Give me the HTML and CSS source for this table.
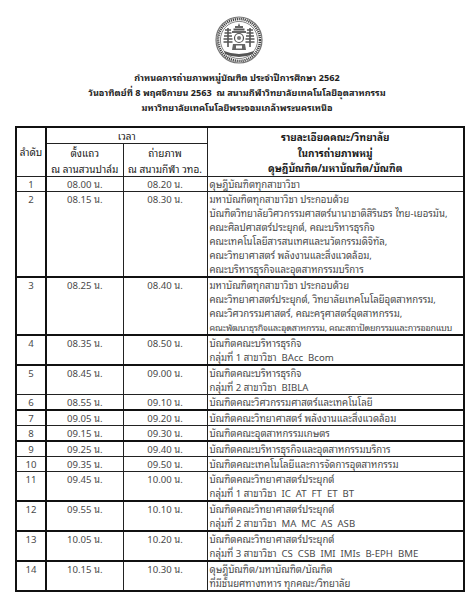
FILE: index.html
```html
<!DOCTYPE html>
<html lang="th">
<head>
<meta charset="utf-8">
<title>กำหนดการถ่ายภาพหมู่บัณฑิต</title>
<link rel="stylesheet" href="styles.css">
</head>
<body>
<div class="page">
  <div class="logo">
    <svg width="48" height="48" viewBox="0 0 48 48" aria-hidden="true">
      <circle cx="24" cy="24" r="23" fill="#fff" stroke="#777" stroke-width="1.2"/>
      <circle cx="24" cy="24" r="21" fill="none" stroke="#444" stroke-width="2.6" stroke-dasharray="1.2 0.8"/>
      <circle cx="24" cy="24" r="18.6" fill="#fff" stroke="#666" stroke-width="0.8"/>
      <path d="M24 7 L25 10 L23 10 Z" fill="#555"/>
      <rect x="20" y="10" width="8" height="2" fill="#666"/>
      <rect x="18.5" y="12.5" width="11" height="2" fill="#555"/>
      <rect x="17" y="15" width="14" height="2" fill="#666"/>
      <circle cx="24" cy="22" r="4.5" fill="#fff" stroke="#555" stroke-width="1.2"/>
      <circle cx="24" cy="22" r="2" fill="#777"/>
      <path d="M12 12 L14 12 L14 31 L12 31 Z" fill="#777"/>
      <path d="M10 14 h6 M9.5 17 h7 M9 20 h8 M8.5 23 h9 M8.5 26 h9" stroke="#555" stroke-width="1.4"/>
      <path d="M34 12 L36 12 L36 31 L34 31 Z" fill="#777"/>
      <path d="M32 14 h6 M31.5 17 h7 M31 20 h8 M30.5 23 h9 M30.5 26 h9" stroke="#555" stroke-width="1.4"/>
      <path d="M18 28 L30 28 L31 34 L17 34 Z" fill="#666"/>
      <rect x="21" y="29.5" width="6" height="3" fill="#fff"/>
      <path d="M9 35 Q24 41 39 35 L38 38 Q24 44 10 38 Z" fill="#555"/>
    </svg>
  </div>
  <div class="title">
    <p>กำหนดการถ่ายภาพหมู่บัณฑิต ประจำปีการศึกษา 2562</p>
    <p>วันอาทิตย์ที่ 8 พฤศจิกายน 2563 &nbsp;ณ สนามกีฬาวิทยาลัยเทคโนโลยีอุตสาหกรรม</p>
    <p>มหาวิทยาลัยเทคโนโลยีพระจอมเกล้าพระนครเหนือ</p>
  </div>

  <table class="schedule">
    <colgroup>
      <col class="c-no">
      <col class="c-line">
      <col class="c-shot">
      <col class="c-detail">
    </colgroup>
    <thead>
      <tr class="h1">
        <th rowspan="2" class="b-right">ลำดับ</th>
        <th colspan="2">เวลา</th>
        <th rowspan="2" class="h-detail">รายละเอียดคณะ/วิทยาลัย<br>ในการถ่ายภาพหมู่<br>ดุษฎีบัณฑิต/มหาบัณฑิต/บัณฑิต</th>
      </tr>
      <tr class="h2">
        <th>ตั้งแถว<br>ณ ลานสวนปาล์ม</th>
        <th>ถ่ายภาพ<br>ณ สนามกีฬา วทอ.</th>
      </tr>
    </thead>
    <tbody>
      <tr>
        <td class="num">1</td><td class="time">08.00 น.</td><td class="time">08.20 น.</td>
        <td class="detail">ดุษฎีบัณฑิตทุกสาขาวิชา</td>
      </tr>
      <tr class="thick">
        <td class="num">2</td><td class="time">08.15 น.</td><td class="time">08.30 น.</td>
        <td class="detail">มหาบัณฑิตทุกสาขาวิชา ประกอบด้วย<br>บัณฑิตวิทยาลัยวิศวกรรมศาสตร์นานาชาติสิรินธร ไทย-เยอรมัน,<br>คณะศิลปศาสตร์ประยุกต์, คณะบริหารธุรกิจ<br>คณะเทคโนโลยีสารสนเทศและนวัตกรรมดิจิทัล,<br>คณะวิทยาศาสตร์ พลังงานและสิ่งแวดล้อม,<br>คณะบริหารธุรกิจและอุตสาหกรรมบริการ</td>
      </tr>
      <tr class="thick">
        <td class="num">3</td><td class="time">08.25 น.</td><td class="time">08.40 น.</td>
        <td class="detail">มหาบัณฑิตทุกสาขาวิชา ประกอบด้วย<br>คณะวิทยาศาสตร์ประยุกต์, วิทยาลัยเทคโนโลยีอุตสาหกรรม,<br>คณะวิศวกรรมศาสตร์, คณะครุศาสตร์อุตสาหกรรม,<br><span class="tight">คณะพัฒนาธุรกิจและอุตสาหกรรม, คณะสถาปัตยกรรมและการออกแบบ</span></td>
      </tr>
      <tr class="thick">
        <td class="num">4</td><td class="time">08.35 น.</td><td class="time">08.50 น.</td>
        <td class="detail">บัณฑิตคณะบริหารธุรกิจ<br>กลุ่มที่ 1 สาขาวิชา &nbsp;BAcc &nbsp;Bcom</td>
      </tr>
      <tr>
        <td class="num">5</td><td class="time">08.45 น.</td><td class="time">09.00 น.</td>
        <td class="detail">บัณฑิตคณะบริหารธุรกิจ<br>กลุ่มที่ 2 สาขาวิชา &nbsp;BIBLA</td>
      </tr>
      <tr class="thick">
        <td class="num">6</td><td class="time">08.55 น.</td><td class="time">09.10 น.</td>
        <td class="detail">บัณฑิตคณะวิศวกรรมศาสตร์และเทคโนโลยี</td>
      </tr>
      <tr>
        <td class="num">7</td><td class="time">09.05 น.</td><td class="time">09.20 น.</td>
        <td class="detail">บัณฑิตคณะวิทยาศาสตร์ พลังงานและสิ่งแวดล้อม</td>
      </tr>
      <tr class="thick">
        <td class="num">8</td><td class="time">09.15 น.</td><td class="time">09.30 น.</td>
        <td class="detail">บัณฑิตคณะอุตสาหกรรมเกษตร</td>
      </tr>
      <tr>
        <td class="num">9</td><td class="time">09.25 น.</td><td class="time">09.40 น.</td>
        <td class="detail">บัณฑิตคณะบริหารธุรกิจและอุตสาหกรรมบริการ</td>
      </tr>
      <tr>
        <td class="num">10</td><td class="time">09.35 น.</td><td class="time">09.50 น.</td>
        <td class="detail">บัณฑิตคณะเทคโนโลยีและการจัดการอุตสาหกรรม</td>
      </tr>
      <tr class="thick">
        <td class="num">11</td><td class="time">09.45 น.</td><td class="time">10.00 น.</td>
        <td class="detail">บัณฑิตคณะวิทยาศาสตร์ประยุกต์<br>กลุ่มที่ 1 สาขาวิชา &nbsp;IC &nbsp;AT &nbsp;FT &nbsp;ET &nbsp;BT</td>
      </tr>
      <tr class="thick">
        <td class="num">12</td><td class="time">09.55 น.</td><td class="time">10.10 น.</td>
        <td class="detail">บัณฑิตคณะวิทยาศาสตร์ประยุกต์<br>กลุ่มที่ 2 สาขาวิชา &nbsp;MA &nbsp;MC &nbsp;AS &nbsp;ASB</td>
      </tr>
      <tr class="thick">
        <td class="num">13</td><td class="time">10.05 น.</td><td class="time">10.20 น.</td>
        <td class="detail">บัณฑิตคณะวิทยาศาสตร์ประยุกต์<br>กลุ่มที่ 3 สาขาวิชา &nbsp;CS &nbsp;CSB &nbsp;IMI &nbsp;IMIs &nbsp;B-EPH &nbsp;BME</td>
      </tr>
      <tr>
        <td class="num">14</td><td class="time">10.15 น.</td><td class="time">10.30 น.</td>
        <td class="detail">ดุษฎีบัณฑิต/มหาบัณฑิต/บัณฑิต<br>ที่มีชั้นยศทางทหาร ทุกคณะ/วิทยาลัย</td>
      </tr>
    </tbody>
  </table>
</div>
</body>
</html>
```
FILE: styles.css
```css
html, body {
  margin: 0;
  padding: 0;
  background: #fff;
}
body {
  font-family: "Noto Sans Thai Looped", "Noto Sans Thai", Tahoma, "Noto Sans", "DejaVu Sans", sans-serif;
  color: #333;
}
.page {
  width: 474px;
  padding-top: 16px;
}
.logo {
  display: flex;
  justify-content: center;
  padding-left: 4px;
  height: 50px;
}
.title {
  margin-top: 4px;
  text-align: center;
  font-weight: bold;
  font-size: 9.1px;
  line-height: 15px;
  color: #222;
}
.title p {
  margin: 0;
}
.schedule {
  margin: 11px 0 0 15px;
  width: 448px;
  table-layout: fixed;
  border-collapse: collapse;
  border: 2px solid #111;
  font-size: 9.6px;
  line-height: 14px;
}
.c-no { width: 30px; }
.c-line { width: 77px; }
.c-shot { width: 84px; }
.c-detail { width: 257px; }
.schedule th,
.schedule td {
  border: 1px solid #222;
  padding: 0;
  white-space: nowrap;
  overflow: hidden;
}
.schedule th {
  font-weight: normal;
  color: #1a1a1a;
  font-size: 10px;
}
.schedule .h1 th {
  height: 15px;
}
.schedule .h2 th {
  padding: 1px 0 0;
  line-height: 15.5px;
}
.schedule .h-detail {
  font-weight: bold;
  line-height: 15.5px;
  padding-top: 1px;
}
.schedule .b-right,
.schedule td.num {
  border-right: 2px solid #111;
}
.schedule td {
  vertical-align: top;
  color: #4a4a4a;
}
.schedule td.num,
.schedule td.time {
  text-align: center;
}
.schedule td.detail {
  padding-left: 2px;
}
.schedule .tight {
  font-size: 9px;
  letter-spacing: -0.25px;
}
.schedule tr.thick td {
  border-bottom: 2px solid #111;
}
```
